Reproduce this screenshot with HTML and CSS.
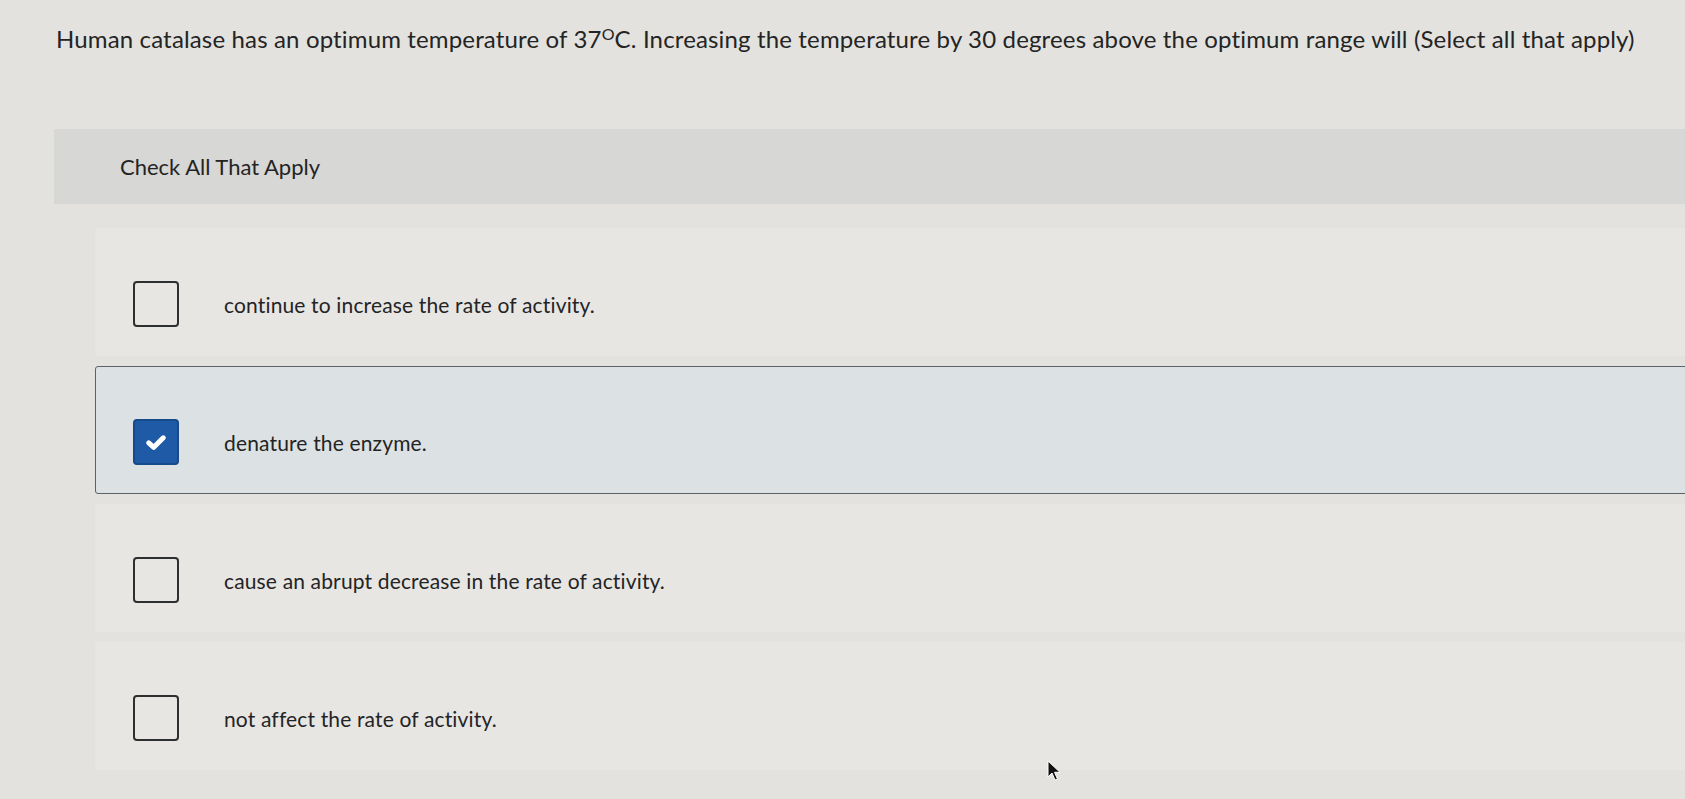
FILE: index.html
```html
<!DOCTYPE html>
<html lang="en">
<head>
  <meta charset="UTF-8" />
  <meta name="viewport" content="width=device-width, initial-scale=1.0"/>
  <title>Check All That Apply</title>
  <link rel="stylesheet" href="styles.css">
</head>
<body>
  <p class="prompt">Human catalase has an optimum temperature of 37<sup>O</sup>C. Increasing the temperature by 30 degrees above the optimum range will (Select all that apply)</p>

  <div class="panel">
    <div class="panel-head">Check All That Apply</div>
    <div class="choices">
      <label class="choice">
        <span class="box"></span>
        <span class="choice-text">continue to increase the rate of activity.</span>
      </label>
      <label class="choice selected">
        <span class="box checked">
          <svg viewBox="0 0 20 20" width="28" height="28"><path d="M4.8 10.6 L8.4 13.8 L15.2 7" fill="none" stroke="#fff" stroke-width="3.6" stroke-linecap="round" stroke-linejoin="round"/></svg>
        </span>
        <span class="choice-text">denature the enzyme.</span>
      </label>
      <label class="choice">
        <span class="box"></span>
        <span class="choice-text">cause an abrupt decrease in the rate of activity.</span>
      </label>
      <label class="choice">
        <span class="box"></span>
        <span class="choice-text">not affect the rate of activity.</span>
      </label>
    </div>
  </div>

  <svg class="cursor" viewBox="0 0 14 22" width="14" height="22"><path d="M1 1 L1 17 L5 13 L8 20 L10.5 19 L7.5 12.3 L13 12.3 Z" fill="#111" stroke="#fff" stroke-width="1"/></svg>
</body>
</html>
```

FILE: styles.css
```css
body {
  margin: 0;
  background: #e3e2df;
  color: #242424;
  font-family: Lato, "Noto Sans", sans-serif;
  overflow: hidden;
  position: relative;
  height: 799px;
}
.prompt {
  margin: 0;
  padding: 24px 0 0 56px;
  font-size: 24px;
  letter-spacing: 0.15px;
  line-height: 30px;
  white-space: nowrap;
}
.prompt sup {
  font-size: 16px;
  vertical-align: 8px;
  line-height: 0;
}
.panel {
  margin: 75px -40px 0 54px;
}
.panel-head {
  background: #d7d7d6;
  height: 75px;
  padding-left: 66px;
  display: flex;
  align-items: center;
  font-size: 22px;
}
.choices {
  margin: 24px 0 0 41px;
  display: flex;
  flex-direction: column;
  gap: 10px;
}
.choice {
  height: 128px;
  box-sizing: border-box;
  padding: 24px 0 0 37px;
  display: flex;
  align-items: center;
  background: #e7e6e3;
  border: 1px solid transparent;
  border-radius: 3px;
}
.choice.selected {
  background: #dce1e3;
  border: 1.5px solid #5d6266;
}
.box {
  width: 46px;
  height: 46px;
  box-sizing: border-box;
  border: 2.5px solid #2e2f31;
  border-radius: 4px;
  display: flex;
  align-items: center;
  justify-content: center;
  flex-shrink: 0;
}
.box.checked {
  background: #1e5aa5;
  border-color: #174a8a;
}
.choice-text {
  margin-left: 45px;
  font-size: 21px;
  letter-spacing: 0.15px;
}
.cursor {
  position: absolute;
  left: 1047px;
  top: 760px;
}
```
